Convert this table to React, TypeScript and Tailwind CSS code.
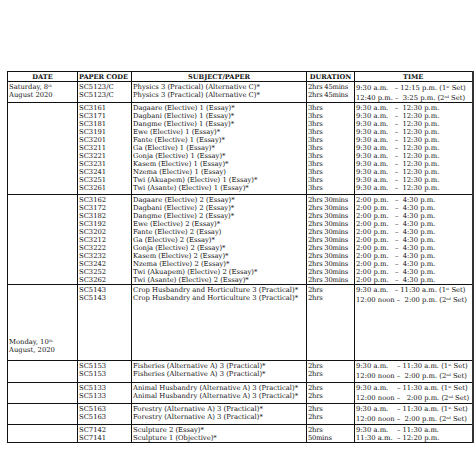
import type { ReactNode } from 'react'

interface Row {
  date?: ReactNode
  codes: string[]
  subjects: string[]
  durations: string[]
  times: ReactNode[]
  h: string
  setTimes?: boolean
}

const setLine = (a: string, b: string, n: string, sup: string) => (
  <>
    <span className="whitespace-pre">{a}</span>
    <span className="whitespace-pre">{b}</span> ({n}
    <sup className="text-[3.5px]">{sup}</sup> Set)
  </>
)

const lang1 = ['Dagaare', 'Dagbani', 'Dangme', 'Ewe', 'Fante', 'Ga', 'Gonja', 'Kasem', 'Nzema', 'Twi (Akuapem)', 'Twi (Asante)']

const ROWS: Row[] = [
  {
    date: (
      <>
        Saturday, 8<sup className="text-[3.5px]">th</sup>
        <br />
        August 2020
      </>
    ),
    codes: ['SC5123/C', 'SC5123/C'],
    subjects: ['Physics 3 (Practical) (Alternative C)*', 'Physics 3 (Practical) (Alternative C)*'],
    durations: ['2hrs 45mins', '2hrs 45mins'],
    times: [setLine('9:30 a.m.   ', '– 12:15 p.m.', '1', 'st'), setLine('12:40 p.m. – ', ' 3:25 p.m.', '2', 'nd')],
    h: 'h-[19px]',
    setTimes: true,
  },
  {
    codes: ['SC3161', 'SC3171', 'SC3181', 'SC3191', 'SC3201', 'SC3211', 'SC3221', 'SC3231', 'SC3241', 'SC3251', 'SC3261'],
    subjects: lang1.map((l) => `${l} (Elective) 1 (Essay)${l === 'Nzema' ? '' : '*'}`),
    durations: lang1.map(() => '3hrs'),
    times: lang1.map(() => '9:30 a.m.   –  12:30 p.m.'),
    h: 'h-[92px]',
  },
  {
    codes: ['SC3162', 'SC3172', 'SC3182', 'SC3192', 'SC3202', 'SC3212', 'SC3222', 'SC3232', 'SC3242', 'SC3252', 'SC3262'],
    subjects: lang1.map((l) => `${l} (Elective) 2 (Essay)${l === 'Fante' ? '' : '*'}`),
    durations: lang1.map(() => '2hrs 30mins'),
    times: lang1.map(() => '2:00 p.m.   –  4:30 p.m.'),
    h: 'h-[90px]',
  },
  {
    date: (
      <>
        Monday, 10<sup className="text-[3.5px]">th</sup>
        <br />
        August, 2020
      </>
    ),
    codes: ['SC5143', 'SC5143'],
    subjects: ['Crop Husbandry and Horticulture 3 (Practical)*', 'Crop Husbandry and Horticulture 3 (Practical)*'],
    durations: ['2hrs', '2hrs'],
    times: [setLine('9:30 a.m.   ', '– 11:30 a.m.', '1', 'st'), setLine('12:00 noon – ', ' 2:00 p.m.', '2', 'nd')],
    h: 'h-[76px]',
    setTimes: true,
  },
  {
    codes: ['SC5153', 'SC5153'],
    subjects: ['Fisheries (Alternative A) 3 (Practical)*', 'Fisheries (Alternative A) 3 (Practical)*'],
    durations: ['2hrs', '2hrs'],
    times: [setLine('9:30 a.m.    ', '– 11:30 a.m.', '1', 'st'), setLine('12:00 noon – ', ' 2:00 p.m.', '2', 'nd')],
    h: 'h-[22px]',
    setTimes: true,
  },
  {
    codes: ['SC5133', 'SC5133'],
    subjects: ['Animal Husbandry (Alternative A) 3 (Practical)*', 'Animal Husbandry (Alternative A) 3 (Practical)*'],
    durations: ['2hrs', '2hrs'],
    times: [setLine('9:30 a.m.    ', '– 11:30 a.m.', '1', 'st'), setLine('12:00 noon – ', '  2:00 p.m.', '2', 'nd')],
    h: 'h-[21px]',
    setTimes: true,
  },
  {
    codes: ['SC5163', 'SC5163'],
    subjects: ['Forestry (Alternative A) 3 (Practical)*', 'Forestry (Alternative A) 3 (Practical)*'],
    durations: ['2hrs', '2hrs'],
    times: [setLine('9:30 a.m.    ', '– 11:30 a.m.', '1', 'st'), setLine('12:00 noon – ', ' 2:00 p.m.', '2', 'nd')],
    h: 'h-[21px]',
    setTimes: true,
  },
  {
    codes: ['SC7142', 'SC7141'],
    subjects: ['Sculpture 2 (Essay)*', 'Sculpture 1 (Objective)*'],
    durations: ['2hrs', '50mins'],
    times: ['9:30 a.m.    – 11:30 a.m.', '11:30 a.m.  – 12:20 p.m.'],
    h: 'h-[18px]',
  },
]

function Lines({ items, spaced }: { items: ReactNode[]; spaced?: boolean }) {
  return (
    <div className={spaced ? 'flex flex-col gap-[2px]' : 'flex flex-col'}>
      {items.map((t, i) => (
        <div key={i} className="whitespace-pre leading-[8px]">
          {t}
        </div>
      ))}
    </div>
  )
}

const cell = 'border border-[#111] px-[1px]'

export default function App() {
  return (
    <div className="min-h-[475px] w-[474px] bg-white pt-[71px] pl-[7px] font-['DejaVu_Serif',serif] text-[6.8px] text-[#111]">
      <table className="table-fixed border-collapse w-[465px] border-r-[2px] border-r-[#333]">
        <colgroup>
          <col className="w-[70px]" />
          <col className="w-[54px]" />
          <col className="w-[175px]" />
          <col className="w-[48px]" />
          <col className="w-[118px]" />
        </colgroup>
        <thead>
          <tr className="h-[10px] font-bold text-[6.6px]">
            <th className="border border-[#111] leading-[8px]">DATE</th>
            <th className="border border-[#111] leading-[8px] text-left pl-[1px]">PAPER CODE</th>
            <th className="border border-[#111] leading-[8px]">SUBJECT/PAPER</th>
            <th className="border border-[#111] leading-[8px]">DURATION</th>
            <th className="border border-[#111] leading-[8px]">TIME</th>
          </tr>
        </thead>
        <tbody>
          {ROWS.map((r, i) => (
            <tr key={i} className={r.h}>
              <td className={`${cell} ${r.date && i > 0 ? 'align-bottom pb-[6px]' : 'align-top pt-[1px]'}`}>
                {r.date && <div className="leading-[8px]">{r.date}</div>}
              </td>
              <td className={`${cell} align-top pt-[1px]`}>
                <Lines items={r.codes} />
              </td>
              <td className={`${cell} align-top pt-[1px]`}>
                <Lines items={r.subjects} />
              </td>
              <td className={`${cell} align-top pt-[1px] tracking-[-0.25px]`}>
                <Lines items={r.durations} />
              </td>
              <td className={`${cell} align-top ${r.setTimes ? 'pt-[1.5px]' : 'pt-[1px]'}`}>
                <Lines items={r.times} spaced={r.setTimes} />
              </td>
            </tr>
          ))}
        </tbody>
      </table>
    </div>
  )
}
